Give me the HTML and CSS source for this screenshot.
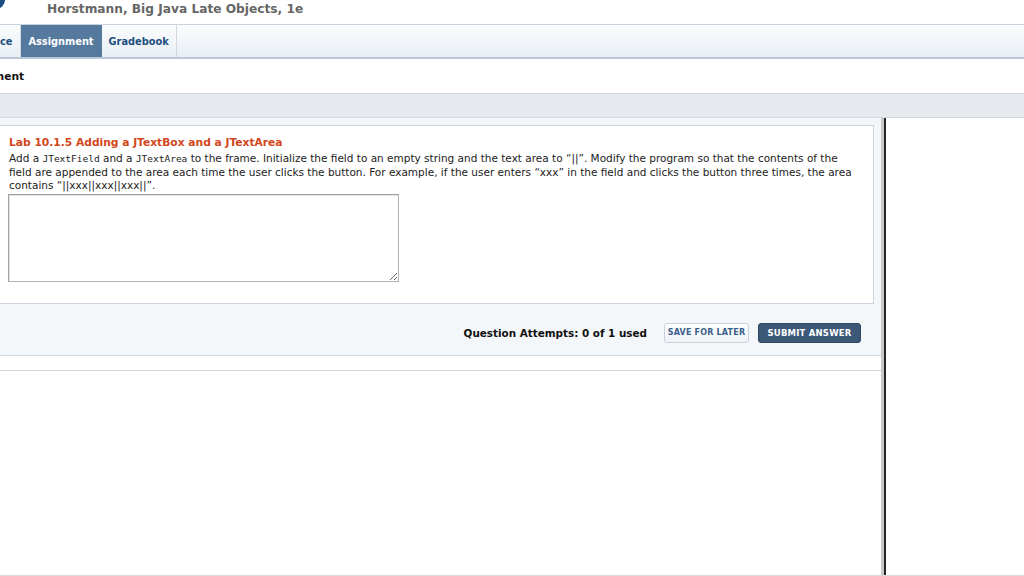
FILE: index.html
```html
<!DOCTYPE html>
<html lang="en">
<head>
  <meta charset="UTF-8">
  <title>Assignment</title>
  <link rel="stylesheet" href="styles.css">
</head>
<body>
<div class="top">
  <span class="logo"></span>
  <span class="book">Horstmann, Big Java Late Objects, 1e</span>
</div>
<ul class="tabs">
  <li><a href="#">ce</a></li>
  <li class="current"><a href="#">Assignment</a></li>
  <li><a href="#">Gradebook</a></li>
</ul>
<div class="crumb">ment</div>
<div class="band"></div>

<div class="main">
  <div class="content">
    <div class="well">
      <div class="question">
        <h3>Lab 10.1.5 Adding a JTextBox and a JTextArea</h3>
        <p>Add a <code>JTextField</code> and a <code>JTextArea</code> to the frame. Initialize the field to an empty string and the text area to “||”. Modify the program so that the contents of the field are appended to the area each time the user clicks the button. For example, if the user enters “xxx” in the field and clicks the button three times, the area contains “||xxx||xxx||xxx||”.</p>
        <textarea></textarea>
      </div>
      <div class="actions">
        <span class="attempts">Question Attempts: 0 of 1 used</span>
        <a href="#" class="btn btn-light">SAVE FOR LATER</a>
        <a href="#" class="btn btn-dark">SUBMIT ANSWER</a>
      </div>
    </div>
    <div class="spacer"></div>
  </div>
  <div class="splitter"></div>
  <div class="side"></div>
</div>
</body>
</html>
```

FILE: styles.css
```css
* {
  margin: 0;
  padding: 0;
  box-sizing: border-box;
}

html, body {
  height: 100%;
  overflow: hidden;
}

body {
  font-family: "DejaVu Sans", Verdana, sans-serif;
  font-size: 10.7px;
  color: #222;
  background-color: #fff;
}

ul {
  list-style: none;
}

a {
  text-decoration: none;
}

/* header */
.top {
  height: 25px;
  display: flex;
  align-items: flex-start;
  border-bottom: 1px solid #c9d4df;
}

.logo {
  width: 18px;
  height: 18px;
  margin: -9px 0 0 -13px;
  border-radius: 50%;
  background-color: #1d4f85;
  flex-shrink: 0;
}

.book {
  margin-left: 42px;
  padding-top: 1px;
  font-size: 12.2px;
  font-weight: bold;
  line-height: 16px;
  color: #666;
}

/* tabs */
.tabs {
  display: flex;
  height: 34px;
  background: linear-gradient(#fbfcfd, #e9eff5);
  border-bottom: 2px solid #b9c8d7;
}

.tabs li {
  border-right: 1px solid #cfd9e3;
}

.tabs a {
  display: block;
  height: 32px;
  padding: 1px 7px 0;
  line-height: 31px;
  font-size: 9.8px;
  font-weight: bold;
  color: #1c4e80;
}

.tabs li:first-child a {
  padding: 1px 8px 0 0;
}

.tabs li.current {
  background-color: #557a9e;
  border-right-color: #557a9e;
}

.tabs li.current a {
  color: #fff;
}

.crumb {
  height: 34px;
  padding-top: 1px;
  line-height: 33px;
  margin-left: -7px;
  font-weight: bold;
  color: #111;
}

.band {
  height: 25px;
  background-color: #e6eaee;
  border-top: 1px solid #d5dade;
  border-bottom: 1px solid #d2d8de;
}

/* main area */
.main {
  display: flex;
  height: 458px;
  border-bottom: 1px solid #d5dbe1;
}

.content {
  width: 881px;
}

.well {
  padding: 7px 7px 0 0;
  background-color: #f4f7fa;
  border-bottom: 1px solid #cfd6de;
}

.question {
  background-color: #fff;
  border: 1px solid #cdd5de;
  border-left: 0;
  padding: 10px 8px 21px 8px;
}

.question h3 {
  font-size: 10.7px;
  line-height: 14px;
  color: #d2461a;
  margin-left: 1px;
  margin-bottom: 2px;
}

.question p {
  font-size: 10.5px;
  line-height: 13.5px;
  margin: 0 6px 0 1px;
  color: #222;
}

.question code {
  font-family: "DejaVu Sans Mono", "Liberation Mono", monospace;
  font-size: 9.5px;
}

.question textarea {
  display: block;
  width: 391px;
  height: 88px;
  margin-top: 1px;
  border: 1px solid #b3b3b3;
  border-top-color: #a0a0a0;
  border-left-color: #a0a0a0;
  box-shadow: inset 1px 1px 0 #e6e6e6;
  background-color: #fff;
}

.actions {
  height: 51px;
  display: flex;
  align-items: center;
  justify-content: flex-end;
  padding: 8px 13px 0 0;
}

.attempts {
  font-weight: bold;
  font-size: 10.4px;
  color: #111;
  margin-right: 17px;
}

.btn {
  display: inline-block;
  height: 20px;
  line-height: 18px;
  border-radius: 3px;
  font-size: 8px;
  font-weight: bold;
  letter-spacing: 0.2px;
  text-align: center;
  white-space: nowrap;
}

.btn-light {
  width: 85px;
  color: #3a5f8a;
  background: linear-gradient(#fff, #eef2f6);
  border: 1px solid #c7d2dd;
}

.btn-dark {
  width: 103px;
  margin-left: 9px;
  font-size: 8.5px;
  color: #fff;
  background-color: #3b5877;
  border: 1px solid #2e4762;
}

.spacer {
  height: 15px;
  border-bottom: 1px solid #cfd6de;
}

.splitter {
  width: 5px;
  border-left: 3px solid #c8c8c8;
  border-right: 2px solid #262626;
}

.side {
  flex: 1;
}
```
